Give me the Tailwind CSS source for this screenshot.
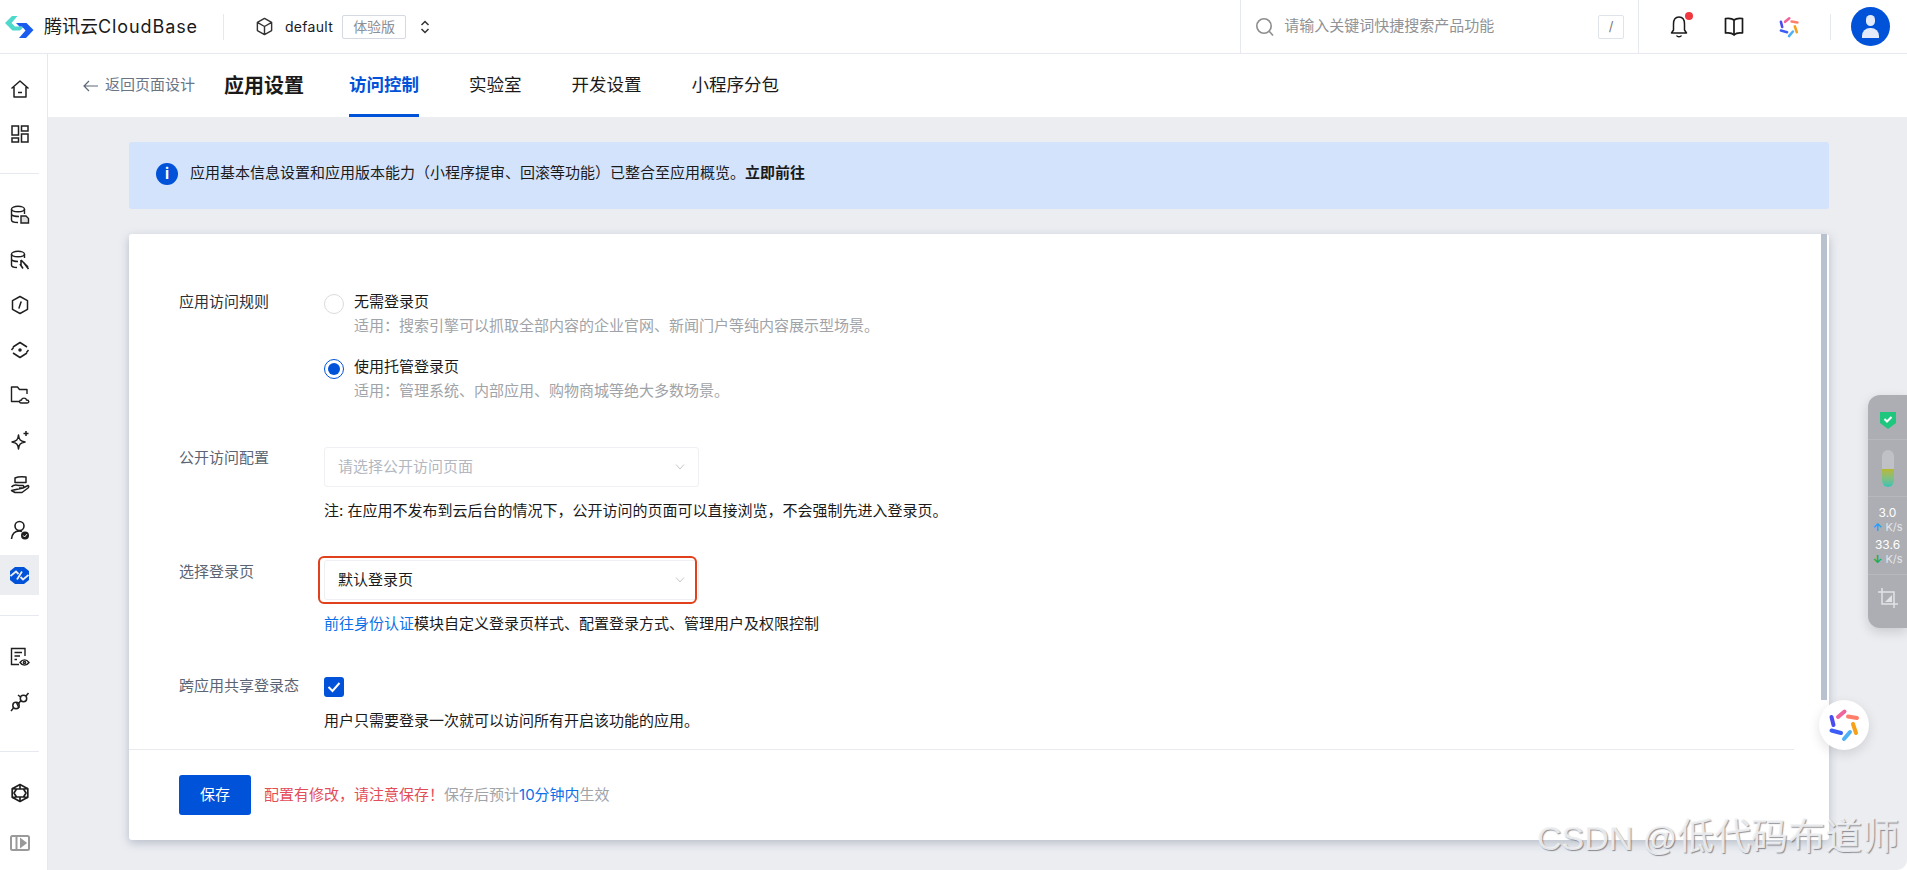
<!DOCTYPE html>
<html lang="zh-CN">
<head>
    <meta charset="UTF-8">
    <title>应用设置 - 腾讯云CloudBase</title>
    <script src="https://cdn.jsdelivr.net/npm/@tailwindcss/browser@4"></script>
</head>
<body class="h-screen overflow-hidden bg-white font-['Inter','Noto_Sans_CJK_SC',sans-serif] text-[#1a1a1a]">
    <!-- top bar -->
    <header class="flex h-[54px] items-center border-b border-[#e6e9f0]">
        <div class="flex w-[223px] items-center pl-[5px]">
            <svg class="h-[22px] w-[29px]" viewBox="0 0 29 22">
                <path d="M0 7 L7 0 H12.5 L6.5 7 L10 10.5 H19 L15 14.5 H7.5 Z" fill="#4fd8cc"/>
                <path d="M11 7 H21.5 L28.5 14 L21 22 H14 L20.5 14.5 L17 10.5 H14.5 Z" fill="#1a5cf0"/>
            </svg>
            <span class="ml-[10px] whitespace-nowrap text-[18px] leading-none">腾讯云<span class="tracking-[0.9px]">CloudBase</span></span>
        </div>
        <div class="h-[26px] w-px bg-[#e6e9f0]"></div>
        <svg class="ml-[31px] h-[19px] w-[19px]" viewBox="0 0 20 20" fill="none" stroke="#333" stroke-width="1.5" stroke-linejoin="round">
            <path d="M10 1.5 L17.5 5.7 V14.3 L10 18.5 L2.5 14.3 V5.7 Z M2.5 5.7 L10 10 L17.5 5.7 M10 10 V18.5"/>
        </svg>
        <span class="ml-[11px] text-[14px] tracking-[0.3px]">default</span>
        <span class="ml-[9px] flex h-[24px] w-[64px] items-center justify-center rounded-[2px] border border-[#d5d9e2] text-[14px] text-[#8b8f97]">体验版</span>
        <svg class="ml-[13px] h-[14px] w-[12px]" viewBox="0 0 12 14" fill="none" stroke="#333" stroke-width="1.5">
            <path d="M2.5 5 L6 1.5 L9.5 5 M2.5 9 L6 12.5 L9.5 9"/>
        </svg>
        <div class="ml-[809px] flex h-[53px] w-[399px] items-center border-x border-[#e6e9f0] pl-[14px]">
            <svg class="h-[20px] w-[20px]" viewBox="0 0 20 20" fill="none" stroke="#8e8e8e" stroke-width="1.6">
                <circle cx="9" cy="9" r="7.2"/><path d="M14 14 L18 18.5"/>
            </svg>
            <span class="ml-[9px] text-[15px] text-[#8f9296]">请输入关键词快捷搜索产品功能</span>
            <span class="ml-[104px] flex h-[24px] w-[26px] items-center justify-center rounded-[2px] border border-[#dfe3ea] text-[13px] text-[#777]">/</span>
        </div>
        <div class="relative ml-[30px]">
            <svg class="h-[24px] w-[20px]" viewBox="0 0 20 24" fill="none" stroke="#1a1a1a" stroke-width="1.5" stroke-linejoin="round">
                <path d="M10 2 C6 2 4.5 5.5 4.5 9 V15 L2.5 18 H17.5 L15.5 15 V9 C15.5 5.5 14 2 10 2 Z M7.5 20.5 C8.5 22.3 11.5 22.3 12.5 20.5"/>
            </svg>
            <span class="absolute -right-[4px] -top-[3px] h-[8px] w-[8px] rounded-full bg-[#f0383e]"></span>
        </div>
        <svg class="ml-[35px] h-[21px] w-[20px]" viewBox="0 0 20 21" fill="none" stroke="#1a1a1a" stroke-width="1.7" stroke-linejoin="round">
            <path d="M10 4 C8 2.2 5 2 1.5 2.5 V17 C5 16.5 8 16.8 10 19 C12 16.8 15 16.5 18.5 17 V2.5 C15 2 12 2.2 10 4 Z M10 4 V19"/>
        </svg>
        <svg class="ml-[34px] h-[22px] w-[22px]" viewBox="12 13 34 34" fill="none" stroke-width="4" stroke-linecap="round">
            <path d="M23 22 L29.5 16.5" stroke="#f0649c"/><path d="M33 21.5 L42 23" stroke="#ff7f6b"/><path d="M38 29 L41 38" stroke="#f7a11b"/><path d="M29 44 L35 37" stroke="#4eb0f7"/><path d="M16.5 35.5 L26 38" stroke="#3b5cf6"/><path d="M16.5 22 L18.5 30" stroke="#4b4cf0"/>
        </svg>
        <div class="ml-[30px] h-[26px] w-px bg-[#e6e9f0]"></div>
        <div class="ml-[20px] flex h-[39px] w-[39px] flex-col items-center justify-center rounded-full bg-[#0052d9]">
            <span class="h-[11px] w-[9px] rounded-full bg-[#e3ebfa]"></span>
            <span class="mt-[2px] h-[10px] w-[17px] rounded-t-[8px] bg-[#e3ebfa]"></span>
        </div>
    </header>

    <div class="flex h-[816px]">
        <!-- side nav -->
        <nav class="flex w-[48px] shrink-0 flex-col border-r border-[#e6e9f0] pr-[8px] pt-[12px]">
            <a class="flex h-[45px] items-center justify-center">
                <svg class="h-[20px] w-[20px]" viewBox="0 0 20 20" fill="none" stroke="#1f1f1f" stroke-width="1.5" stroke-linejoin="round"><path d="M1.5 9.5 L10 2 L18.5 9.5 M4 8 V18 H16 V8 M8 13.5 H12"/></svg>
            </a>
            <a class="flex h-[45px] items-center justify-center">
                <svg class="h-[18px] w-[18px]" viewBox="0 0 18 18" fill="none" stroke="#1f1f1f" stroke-width="1.5"><rect x="1" y="1" width="6.5" height="9"/><rect x="10.5" y="1" width="6.5" height="5"/><rect x="1" y="13" width="6.5" height="4"/><rect x="10.5" y="9" width="6.5" height="8"/></svg>
            </a>
            <div class="mb-[18px] mt-[17px] h-px bg-[#e6e9f0]"></div>
            <a class="flex h-[45px] items-center justify-center">
                <svg class="h-[20px] w-[20px]" viewBox="0 0 20 20" fill="none" stroke="#1f1f1f" stroke-width="1.4"><ellipse cx="8" cy="4" rx="6.5" ry="2.7"/><path d="M1.5 4 V15 C1.5 16.5 4 17.5 8 17.5 M14.5 4 V9 M1.5 9.5 C2.5 11 5 11.5 9 11.5"/><path d="M11 11 H16 L18.5 13.5 V18 H11 Z" fill="#1f1f1f" fill-opacity=".15"/></svg>
            </a>
            <a class="flex h-[45px] items-center justify-center">
                <svg class="h-[20px] w-[20px]" viewBox="0 0 20 20" fill="none" stroke="#1f1f1f" stroke-width="1.4"><ellipse cx="8" cy="4" rx="6.5" ry="2.7"/><path d="M1.5 4 V15 C1.5 16.5 4 17.5 7 17.5 M14.5 4 V8 M1.5 9.5 C2.5 11 5 11.5 8 11.5"/><path d="M11 10 L11 15 M11 10 L18 17 M14 13 L18.5 19 M10 14 L13 18.5" stroke-width="1.6"/></svg>
            </a>
            <a class="flex h-[45px] items-center justify-center">
                <svg class="h-[20px] w-[20px]" viewBox="0 0 20 20" fill="none" stroke="#1f1f1f" stroke-width="1.5" stroke-linejoin="round"><path d="M10 1.5 L17.5 5.7 V14.3 L10 18.5 L2.5 14.3 V5.7 Z"/><path d="M11 7 L9 13" stroke-linecap="round"/></svg>
            </a>
            <a class="flex h-[45px] items-center justify-center">
                <svg class="h-[20px] w-[20px]" viewBox="0 0 20 20" fill="none" stroke="#1f1f1f" stroke-width="1.5" stroke-linejoin="round"><path d="M3 7 L10 2.5 L17 7 M17 13 L10 17.5 L3 13 M1.5 10 L3.5 7.5 M18.5 10 L16.5 12.5"/><circle cx="10" cy="10" r="1" fill="#1f1f1f"/></svg>
            </a>
            <a class="flex h-[45px] items-center justify-center">
                <svg class="h-[20px] w-[20px]" viewBox="0 0 20 20" fill="none" stroke="#1f1f1f" stroke-width="1.4" stroke-linejoin="round"><path d="M9 16.5 H1.5 V2 H7.5 L9.5 4.5 H17 V9"/><path d="M11 18 C9 18 9 15 11.5 15 C12 12.5 16 12.5 16.5 15 C19.5 15 19.5 18 17 18 Z"/></svg>
            </a>
            <a class="flex h-[45px] items-center justify-center">
                <svg class="h-[20px] w-[20px]" viewBox="0 0 20 20" fill="none" stroke="#1f1f1f" stroke-width="1.5" stroke-linejoin="round"><path d="M8.5 5 C9 10 10.5 11 15 12 C10.5 13 9 14 8.5 19 C8 14 6.5 13 2 12 C6.5 11 8 10 8.5 5 Z"/><path d="M16 1 V6 M13.5 3.5 H18.5"/></svg>
            </a>
            <a class="flex h-[45px] items-center justify-center">
                <svg class="h-[20px] w-[20px]" viewBox="0 0 20 20" fill="none" stroke="#1f1f1f" stroke-width="1.5" stroke-linejoin="round"><path d="M5 3 C8 1.5 12 1.5 16 2 V7.5 H5 Z M5 3 V7.5"/><path d="M1.5 12 C3 10 6 9.5 9 10.5 H13 C14 11 14 12.5 13 13 H9 M13 13 L18 10.5 C19 11 19 12 18 13 L12 17.5 H5 L1.5 15.5 Z"/></svg>
            </a>
            <a class="flex h-[45px] items-center justify-center">
                <svg class="h-[20px] w-[20px]" viewBox="0 0 20 20" fill="none" stroke="#1f1f1f" stroke-width="1.6"><circle cx="9.5" cy="6" r="4.5"/><path d="M1.5 19 C2 14 5 11 9.5 11 C10.5 11 11.5 11.2 12 11.5"/><circle cx="15" cy="15.5" r="4" fill="#1f1f1f" stroke="none"/><path d="M13.2 15.5 L14.6 17 L16.9 14.2" stroke="#fff" stroke-width="1"/></svg>
            </a>
            <a class="mt-[3px] flex h-[40px] items-center justify-center bg-[#ebedf1]">
                <svg class="h-[17px] w-[19px]" viewBox="0 0 19 17">
                    <path d="M5 0 H14 L19 4 V13 L14 17 H5 L0 13 V4 Z" fill="#0052d9"/>
                    <path d="M0.5 9 L6 4.5 L8.5 7 M10.5 10 L13 12.5 L18.5 8 M7 12.5 L12 4.5" fill="none" stroke="#ebedf1" stroke-width="1.8"/>
                </svg>
            </a>
            <div class="mb-[18px] mt-[20px] h-px bg-[#e6e9f0]"></div>
            <a class="flex h-[45px] items-center justify-center">
                <svg class="h-[20px] w-[20px]" viewBox="0 0 20 20" fill="none" stroke="#1f1f1f" stroke-width="1.4"><path d="M9 17.5 H1.5 V1.5 H15 V9 M4.5 5.5 H12 M4.5 9 H10 M4.5 12.5 H7"/><path d="M10 15.5 C12.5 12 16.5 12 19 15.5 C16.5 19 12.5 19 10 15.5 Z"/><circle cx="14.5" cy="15.5" r="1.1"/></svg>
            </a>
            <a class="flex h-[45px] items-center justify-center">
                <svg class="h-[20px] w-[20px]" viewBox="0 0 20 20" fill="none" stroke="#1f1f1f" stroke-width="1.5"><circle cx="6" cy="13.5" r="3.2"/><circle cx="13.5" cy="6.5" r="3.2"/><path d="M1 19 L3.5 16 M8.5 11.5 L11 8.5 M16 4 L18.5 1 M8 3 L10.5 5 M9 16 L6.5 10.5"/></svg>
            </a>
            <div class="mb-[18px] mt-[27px] h-px bg-[#e6e9f0]"></div>
            <a class="flex h-[45px] items-center justify-center">
                <svg class="h-[20px] w-[20px]" viewBox="0 0 20 20" fill="none" stroke="#1f1f1f" stroke-width="1.7" stroke-linejoin="round"><path d="M10 1.5 L17.8 5.7 V14.3 L10 18.5 L2.2 14.3 V5.7 Z"/><path d="M6.5 6 H13.5 L16 10 L13.5 14 H6.5 L4 10 Z M10 1.5 V6 M10 14 V18.5 M2.2 5.7 L6.5 6 M17.8 5.7 L13.5 6 M2.2 14.3 L6.5 14 M17.8 14.3 L13.5 14"/></svg>
            </a>
            <a class="mt-[5px] flex h-[45px] items-center justify-center">
                <svg class="h-[16px] w-[20px]" viewBox="0 0 20 16" fill="none" stroke="#9a9a9a" stroke-width="2"><rect x="1" y="1" width="18" height="14" rx="1.5"/><path d="M6.5 1 V15"/><path d="M11 4.5 L15.5 8 L11 11.5 Z" fill="#9a9a9a"/></svg>
            </a>
        </nav>

        <div class="flex min-w-0 flex-1 flex-col rounded-br-[10px] bg-[#ebedf1]">
            <!-- tabs -->
            <div class="flex h-[63px] items-center bg-white pl-[35px]">
                <svg class="h-[12px] w-[15px]" viewBox="0 0 15 12" fill="none" stroke="#5c6778" stroke-width="1.2"><path d="M6 1 L1 6 L6 11 M1 6 H15"/></svg>
                <span class="ml-[7px] text-[15px] text-[#6b7685]">返回页面设计</span>
                <span class="ml-[29px] text-[20px] font-bold">应用设置</span>
                <div class="ml-[45px] flex h-full flex-col items-center justify-center border-b-[3px] border-[#0052d9] pt-[3px]">
                    <span class="text-[17.5px] font-bold text-[#0052d9]">访问控制</span>
                </div>
                <span class="ml-[50px] text-[17.5px]">实验室</span>
                <span class="ml-[50px] text-[17.5px]">开发设置</span>
                <span class="ml-[50px] text-[17.5px]">小程序分包</span>
            </div>

            <!-- notice -->
            <div class="ml-[81px] mr-[78px] mt-[25px] flex h-[67px] items-center rounded-[3px] bg-[#d4e3fc] pb-[4px] pl-[27px]">
                <span class="flex h-[22px] w-[22px] items-center justify-center rounded-full bg-[#0052d9] text-[15px] font-bold leading-none text-white">i</span>
                <p class="ml-[12px] text-[15px]">应用基本信息设置和应用版本能力（小程序提审、回滚等功能）已整合至应用概览。<b class="font-bold">立即前往</b></p>
            </div>

            <!-- settings card -->
            <div class="ml-[81px] mr-[78px] mt-[25px] flex h-[606px] flex-col rounded-[3px] bg-white pr-[2px] shadow-[0_3px_10px_rgba(90,100,125,0.35)]">
                <div class="flex h-[515px] justify-between">
                    <div class="pl-[50px] pt-[56px] text-[15px] leading-[24px]">
                        <div class="flex">
                            <label class="w-[145px] text-[#2c3138]">应用访问规则</label>
                            <div>
                                <div class="flex">
                                    <span class="mt-[4px] h-[20px] w-[20px] rounded-full border border-[#d9dbe0]"></span>
                                    <div class="ml-[10px]">
                                        <p>无需登录页</p>
                                        <p class="text-[#a0a3a8]">适用：搜索引擎可以抓取全部内容的企业官网、新闻门户等纯内容展示型场景。</p>
                                    </div>
                                </div>
                                <div class="mt-[17px] flex">
                                    <span class="mt-[4px] flex h-[20px] w-[20px] items-center justify-center rounded-full border border-[#0052d9]"><span class="h-[12px] w-[12px] rounded-full bg-[#0052d9]"></span></span>
                                    <div class="ml-[10px]">
                                        <p>使用托管登录页</p>
                                        <p class="text-[#a0a3a8]">适用：管理系统、内部应用、购物商城等绝大多数场景。</p>
                                    </div>
                                </div>
                            </div>
                        </div>
                        <div class="mt-[43px] flex">
                            <label class="w-[145px] text-[#5b6472]">公开访问配置</label>
                            <div>
                                <div class="mt-[1px] flex h-[40px] w-[375px] items-center justify-between rounded-[3px] border border-[#eef0f3] px-[13px] text-[#b3b7bf]">
                                    <span>请选择公开访问页面</span>
                                    <svg class="h-[8px] w-[10px]" viewBox="0 0 10 8" fill="none" stroke="#c5c8ce"><path d="M1 1.5 L5 6 L9 1.5"/></svg>
                                </div>
                                <p class="mt-[12px] whitespace-nowrap">注: 在应用不发布到云后台的情况下，公开访问的页面可以直接浏览，不会强制先进入登录页。</p>
                            </div>
                        </div>
                        <div class="mt-[36px] flex">
                            <label class="w-[145px] pt-[1px] text-[#5b6472]">选择登录页</label>
                            <div>
                                <div class="relative mt-[1px] flex h-[40px] w-[375px] items-center justify-between rounded-[3px] border border-[#eef0f3] px-[13px]">
                                    <span>默认登录页</span>
                                    <svg class="h-[8px] w-[10px]" viewBox="0 0 10 8" fill="none" stroke="#c5c8ce"><path d="M1 1.5 L5 6 L9 1.5"/></svg>
                                    <span class="absolute -bottom-[5px] -left-[7px] -top-[5px] right-[1px] rounded-[6px] border-2 border-[#e0401c]"></span>
                                </div>
                                <p class="mt-[12px]"><a class="text-[#0a6fe8]">前往身份认证</a>模块自定义登录页样式、配置登录方式、管理用户及权限控制</p>
                            </div>
                        </div>
                        <div class="mt-[38px] flex">
                            <label class="w-[145px] text-[#5b6472]">跨应用共享登录态</label>
                            <div>
                                <span class="mt-[3px] flex h-[20px] w-[20px] items-center justify-center rounded-[3px] bg-[#0052d9]">
                                    <svg class="h-[12px] w-[14px]" viewBox="0 0 14 12" fill="none" stroke="#fff" stroke-width="2"><path d="M1.5 6 L5.5 10 L12.5 2"/></svg>
                                </span>
                                <p class="mt-[12px]">用户只需要登录一次就可以访问所有开启该功能的应用。</p>
                            </div>
                        </div>
                    </div>
                    <!-- scrollbar -->
                    <div class="h-[466px] w-[6px] bg-[#b8c2cf]"></div>
                </div>
                <div class="mr-[33px] flex h-[91px] items-center border-t border-[#e8eaee] pl-[50px] text-[15px]">
                    <button class="h-[40px] w-[72px] rounded-[3px] bg-[#0052d9] text-white">保存</button>
                    <span class="ml-[13px] text-[#e34d59]">配置有修改，请注意保存！</span>
                    <span class="text-[#a0a3a8]">保存后预计<span class="text-[#0a6fe8]">10分钟内</span>生效</span>
                </div>
            </div>
        </div>
    </div>

    <!-- desktop widget over the page -->
    <div class="absolute left-[1868px] top-[395px] flex h-[233px] w-[39px] flex-col items-center rounded-l-[12px] bg-[#acaeb3] shadow-[0_4px_12px_rgba(0,0,0,0.15)]">
        <div class="flex h-[45px] w-full items-center justify-center border-b border-[#b6b8bc] pt-[5px]">
            <svg class="h-[18px] w-[16px]" viewBox="0 0 16 18"><path d="M0 1 H16 V12 L8 18 L0 12 Z" fill="#1fc77e"/><path d="M4.5 8 L7 10.5 L11.5 6" fill="none" stroke="#fff" stroke-width="2"/></svg>
        </div>
        <div class="flex h-[57px] w-full items-center justify-center border-b border-[#b6b8bc]">
            <div class="flex h-[37px] w-[12px] flex-col justify-end overflow-hidden rounded-full bg-[#bfc1c6]">
                <div class="h-[18px] bg-gradient-to-b from-[#b5b82a] to-[#2cc2b4]"></div>
            </div>
        </div>
        <div class="flex h-[78px] w-full flex-col items-center justify-center border-b border-[#b6b8bc] text-[12px] leading-[14px] text-white">
            <span>3.0</span>
            <span class="whitespace-nowrap text-[11px] text-[#e4e5e8]"><b class="font-bold text-[#1a9fff]">↑</b> K/s</span>
            <span class="mt-[4px]">33.6</span>
            <span class="whitespace-nowrap text-[11px] text-[#e4e5e8]"><b class="font-bold text-[#0bb04e]">↓</b> K/s</span>
        </div>
        <div class="flex flex-1 items-center justify-center pb-[8px]">
            <svg class="h-[20px] w-[20px]" viewBox="0 0 20 20" fill="none" stroke="#e2e3e6" stroke-width="1.5"><path d="M4 0 V16 H20 M0 4 H16 V20"/><path d="M14 7 V14 H7 Z" fill="#e2e3e6" stroke="none"/></svg>
        </div>
    </div>

    <div class="absolute left-[1819px] top-[700px] flex h-[50px] w-[50px] items-center justify-center rounded-full bg-white shadow-[0_4px_12px_rgba(0,0,0,0.12)]">
        <svg class="h-[34px] w-[34px]" viewBox="12 13 34 34" fill="none" stroke-width="4" stroke-linecap="round">
            <path d="M23 22 L29.5 16.5" stroke="#f0649c"/><path d="M33 21.5 L42 23" stroke="#ff7f6b"/><path d="M38 29 L41 38" stroke="#f7a11b"/><path d="M29 44 L35 37" stroke="#4eb0f7"/><path d="M16.5 35.5 L26 38" stroke="#3b5cf6"/><path d="M16.5 22 L18.5 30" stroke="#4b4cf0"/>
        </svg>
    </div>

    <!-- image watermark -->
    <div class="absolute left-[1537px] top-[816px] whitespace-nowrap font-['Liberation_Sans','Noto_Sans_CJK_SC',sans-serif] text-[37px] leading-[44px] text-[#f2f3f5]/90 [text-shadow:1px_1px_1px_rgba(60,60,70,0.55)]"><span class="text-[34px]">CSDN @</span>低代码布道师</div>
</body>
</html>
